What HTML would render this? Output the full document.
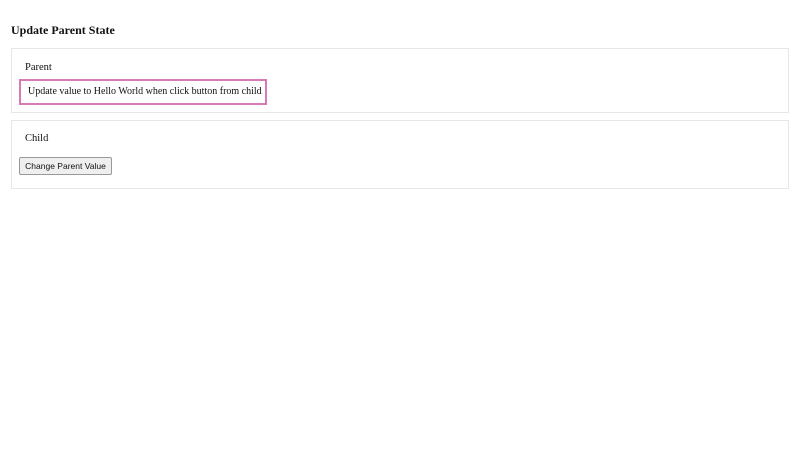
<!DOCTYPE html>
<html><head><style>
body{margin:0;width:800px;height:450px;background:#fff;font-family:"Liberation Serif",serif;color:#111;position:relative}
.a{position:absolute;white-space:nowrap}
.box{position:absolute;left:11px;width:776px;border:1px solid #e6e6e6}
</style></head><body>
<div class="a" style="left:11px;top:23px;font-weight:bold;font-size:12px;">Update Parent State</div>
<div class="box" style="top:48px;height:63px"></div>
<div class="a" style="left:25px;top:62px;font-size:10.5px">Parent</div>
<div class="a" style="left:19px;top:79px;height:22px;border:2px solid #d77bb5;font-size:10px;line-height:22px;padding-left:7px;width:237px">Update value to Hello World when click button from child</div>
<div class="box" style="top:120px;height:67px"></div>
<div class="a" style="left:25px;top:133px;font-size:10.5px">Child</div>
<div class="a" style="left:19px;top:157px;width:91px;height:16px;border:1px solid #999;border-radius:2px;background:#efefef;font-family:'Liberation Sans',sans-serif;font-size:8.5px;line-height:16px;text-align:center">Change Parent Value</div>
</body></html>
